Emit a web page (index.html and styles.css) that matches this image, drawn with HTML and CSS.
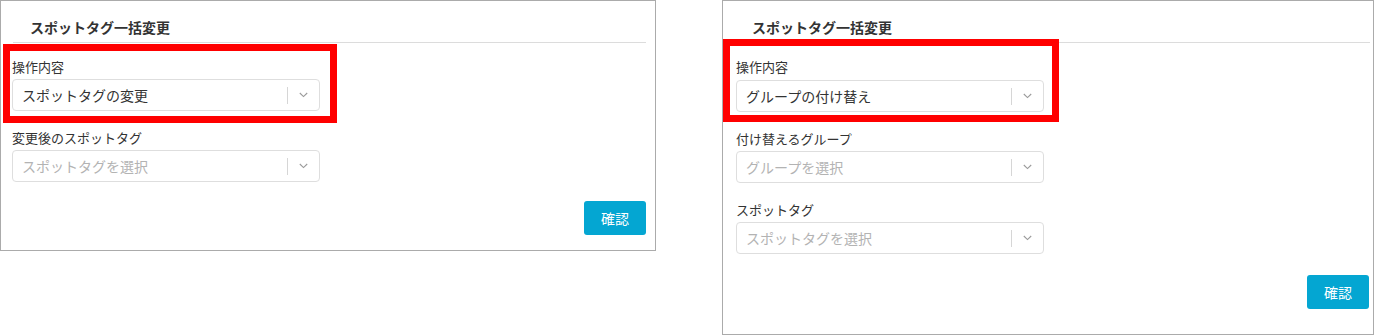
FILE: index.html
```html
<!DOCTYPE html>
<html lang="ja">
<head>
<meta charset="utf-8">
<title>スポットタグ一括変更</title>
<link rel="stylesheet" href="styles.css">
</head>
<body>
<div class="page">
  <section class="panel panel-a">
    <header class="panel-header"><h2 class="panel-title">スポットタグ一括変更</h2></header>
    <div class="panel-body">
      <div class="field">
        <label class="field-label">操作内容</label>
        <div class="select">
          <span class="select-value">スポットタグの変更</span>
          <span class="select-sep"></span>
          <span class="select-indicator"><svg width="9" height="6" viewBox="0 0 9 6"><polyline points="0.8,1 4.5,4.6 8.2,1" fill="none" stroke="#9a9a9a" stroke-width="1.1"/></svg></span>
        </div>
      </div>
      <div class="field">
        <label class="field-label">変更後のスポットタグ</label>
        <div class="select">
          <span class="select-value placeholder">スポットタグを選択</span>
          <span class="select-sep"></span>
          <span class="select-indicator"><svg width="9" height="6" viewBox="0 0 9 6"><polyline points="0.8,1 4.5,4.6 8.2,1" fill="none" stroke="#9a9a9a" stroke-width="1.1"/></svg></span>
        </div>
      </div>
      <div class="actions"><button class="btn-primary">確認</button></div>
    </div>
    <div class="highlight highlight-a"></div>
  </section>

  <section class="panel panel-b">
    <header class="panel-header"><h2 class="panel-title">スポットタグ一括変更</h2></header>
    <div class="panel-body">
      <div class="field">
        <label class="field-label">操作内容</label>
        <div class="select">
          <span class="select-value">グループの付け替え</span>
          <span class="select-sep"></span>
          <span class="select-indicator"><svg width="9" height="6" viewBox="0 0 9 6"><polyline points="0.8,1 4.5,4.6 8.2,1" fill="none" stroke="#9a9a9a" stroke-width="1.1"/></svg></span>
        </div>
      </div>
      <div class="field">
        <label class="field-label">付け替えるグループ</label>
        <div class="select">
          <span class="select-value placeholder">グループを選択</span>
          <span class="select-sep"></span>
          <span class="select-indicator"><svg width="9" height="6" viewBox="0 0 9 6"><polyline points="0.8,1 4.5,4.6 8.2,1" fill="none" stroke="#9a9a9a" stroke-width="1.1"/></svg></span>
        </div>
      </div>
      <div class="field">
        <label class="field-label">スポットタグ</label>
        <div class="select">
          <span class="select-value placeholder">スポットタグを選択</span>
          <span class="select-sep"></span>
          <span class="select-indicator"><svg width="9" height="6" viewBox="0 0 9 6"><polyline points="0.8,1 4.5,4.6 8.2,1" fill="none" stroke="#9a9a9a" stroke-width="1.1"/></svg></span>
        </div>
      </div>
      <div class="actions"><button class="btn-primary">確認</button></div>
    </div>
    <div class="highlight highlight-b"></div>
  </section>
</div>
</body>
</html>
```

FILE: styles.css
```css
* { box-sizing: border-box; }
html, body { margin: 0; padding: 0; background: #fff; }
body {
  font-family: "Noto Sans CJK JP", "Noto Sans", "Liberation Sans", sans-serif;
  color: #333;
}
.page {
  display: flex;
  align-items: flex-start;
  gap: 66px;
}
.panel {
  position: relative;
  border: 1px solid #ababab;
  background: #fff;
  display: flex;
  flex-direction: column;
}
.panel-a { width: 656px; height: 251px; }
.panel-b { width: 652px; height: 335px; }

.panel-header {
  height: 42px;
  padding: 16px 0 0 17px;
  border-bottom: 1px solid #dcdcdc;
}
.panel-a .panel-header { margin: 0 9px 0 12px; }
.panel-b .panel-header { margin: 0 3px 0 12px; }
.panel-title {
  margin: 0;
  font-size: 14px;
  line-height: 20px;
  font-weight: 700;
  color: #333;
}
.panel-body {
  display: flex;
  flex-direction: column;
  gap: 18px;
  padding-top: 15px;
}
.panel-a .panel-body { padding-left: 11px; padding-right: 9px; }
.panel-b .panel-body { padding-left: 13px; padding-right: 4px; }

.field { display: flex; flex-direction: column; gap: 3px; }
.panel-b .field:first-child { gap: 4px; }
.field-label {
  font-size: 13px;
  line-height: 18px;
  color: #333;
}
.select {
  width: 308px;
  height: 32px;
  border: 1px solid #dedede;
  border-radius: 4px;
  display: flex;
  align-items: center;
  background: #fff;
}
.select-value {
  flex: 1;
  padding-left: 9px;
  font-size: 14px;
  line-height: 20px;
  color: #333;
}
.select-value.placeholder { color: #b3b3b3; }
.select-sep {
  width: 1px;
  height: 17px;
  background: #d6d6d6;
}
.select-indicator {
  width: 31px;
  height: 100%;
  display: flex;
  align-items: center;
  justify-content: center;
}
.select-indicator svg { display: block; }

.actions { display: flex; justify-content: flex-end; }
.panel-a .actions { margin-top: 1px; }
.panel-b .actions { margin-top: 3px; }
.btn-primary {
  width: 62px;
  height: 34px;
  border: 0;
  border-radius: 3px;
  background: #04a6d2;
  color: #fff;
  font-family: inherit;
  font-size: 14px;
  padding: 0;
}

.highlight {
  position: absolute;
  border: 7px solid #ff0000;
  pointer-events: none;
}
.highlight-a { left: 2px; top: 43px; width: 334px; height: 79px; }
.highlight-b { left: 0; top: 38px; width: 336px; height: 83px; }
```
